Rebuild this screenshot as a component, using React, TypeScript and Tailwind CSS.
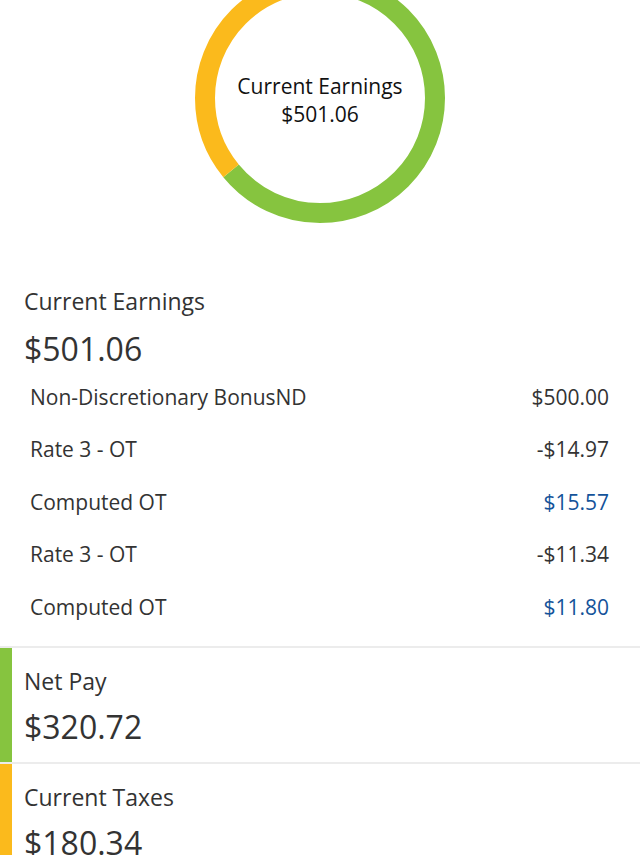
import React from 'react';

const earnings = [
    { label: 'Non-Discretionary BonusND', amount: '$500.00', computed: false },
    { label: 'Rate 3 - OT', amount: '-$14.97', computed: false },
    { label: 'Computed OT', amount: '$15.57', computed: true },
    { label: 'Rate 3 - OT', amount: '-$11.34', computed: false },
    { label: 'Computed OT', amount: '$11.80', computed: true },
];

const R = 115;
const C = 2 * Math.PI * R;
const netShare = 320.72 / 501.06;

function Donut() {
    return (
        <div className="h-[223px] overflow-hidden flex justify-center">
            <div className="relative w-[250px] h-[250px] -mt-[27px] shrink-0">
                <svg width="250" height="250" viewBox="0 0 250 250">
                    <g transform="rotate(-90 125 125)">
                        <circle
                            cx="125"
                            cy="125"
                            r={R}
                            fill="none"
                            stroke="#86c43f"
                            strokeWidth="20"
                            strokeDasharray={`${C * netShare} ${C}`}
                        />
                        <circle
                            cx="125"
                            cy="125"
                            r={R}
                            fill="none"
                            stroke="#fbba1c"
                            strokeWidth="20"
                            strokeDasharray={`${C * (1 - netShare)} ${C}`}
                            strokeDashoffset={-C * netShare}
                        />
                    </g>
                </svg>
                <div className="absolute inset-0 flex flex-col items-center justify-center pt-[4px] text-[21px] leading-[28px] text-[#111]">
                    <span>Current Earnings</span>
                    <span>$501.06</span>
                </div>
            </div>
        </div>
    );
}

function Summary({ label, amount, color }: { label: string; amount: string; color: string }) {
    return (
        <div className="flex border-t-2 border-[#ececec]">
            <div className={`w-[12px] shrink-0 ${color}`} />
            <div className="flex-1 pl-[12px] pt-[18px] pb-[13px]">
                <div className="text-[23px] leading-[30px] text-[#333]">{label}</div>
                <div className="mt-[9px] text-[32px] leading-[44px] text-[#333]">{amount}</div>
            </div>
        </div>
    );
}

export default function App() {
    return (
        <div className="w-[640px] h-[855px] overflow-hidden bg-white" style={{ fontFamily: '"Open Sans", "Noto Sans", sans-serif' }}>
            <Donut />
            <div className="pt-[63px] pl-[24px]">
                <div className="text-[23px] leading-[30px] text-[#333]">Current Earnings</div>
                <div className="mt-[11px] text-[32px] leading-[44px] text-[#333]">$501.06</div>
            </div>
            <div className="pl-[30px] pr-[31px] pb-[12px]">
                {earnings.map((row, i) => (
                    <div key={i} className="h-[52.5px] flex items-center justify-between text-[21px]">
                        <span className="text-[#333]">{row.label}</span>
                        <span className={row.computed ? 'text-[#14539a]' : 'text-[#333]'}>{row.amount}</span>
                    </div>
                ))}
            </div>
            <Summary label="Net Pay" amount="$320.72" color="bg-[#86c43f]" />
            <Summary label="Current Taxes" amount="$180.34" color="bg-[#fbba1c]" />
        </div>
    );
}
